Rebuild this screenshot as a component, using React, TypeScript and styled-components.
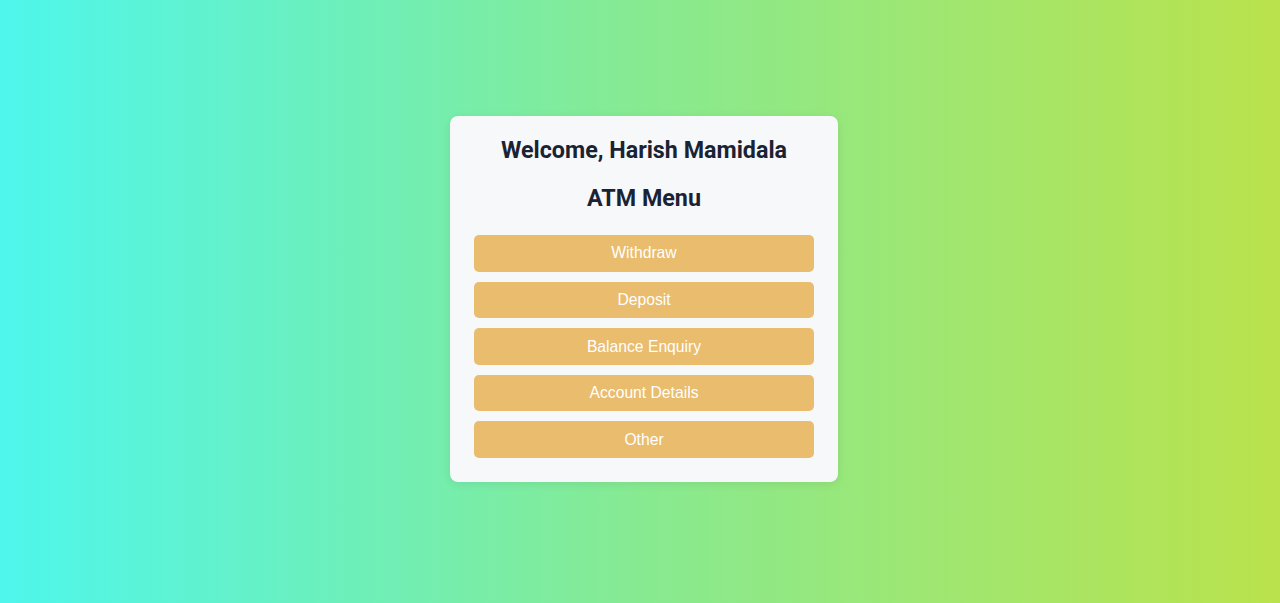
import styled, { createGlobalStyle } from 'styled-components';

const MENU_ITEMS = ['Withdraw', 'Deposit', 'Balance Enquiry', 'Account Details', 'Other'];

const GlobalStyle = createGlobalStyle`
  html, body {
    margin: 0;
    padding: 0;
  }
  body {
    font-family: Roboto, "Liberation Sans", Arial, sans-serif;
  }
`;

export default function App() {
  return (
    <>
      <GlobalStyle />
      <Page>
        <Card>
          <Greeting>Welcome, Harish Mamidala</Greeting>
          <MenuTitle>ATM Menu</MenuTitle>
          <MenuList>
            {MENU_ITEMS.map((label) => (
              <MenuButton key={label}>{label}</MenuButton>
            ))}
          </MenuList>
        </Card>
      </Page>
    </>
  );
}

const Page = styled.div`
  width: 100%;
  height: 603px;
  background: linear-gradient(90deg, #4ef6ec 0%, #87ea91 50%, #bae24c 100%);
  display: flex;
  align-items: center;
  justify-content: center;
`;

const Card = styled.div`
  width: 340px;
  padding: 24px;
  margin: -5px 0 0 8px;
  background-color: #f7f8fa;
  border-radius: 8px;
  box-shadow: 0 2px 10px rgba(0, 0, 0, 0.08);
  display: flex;
  flex-direction: column;
  align-items: center;
`;

const Greeting = styled.h2`
  margin: -4px 0 0;
  font-family: Roboto, "Liberation Sans", sans-serif;
  font-size: 23.3px;
  font-weight: 700;
  line-height: 28px;
  color: #1a2333;
`;

const MenuTitle = styled(Greeting)`
  margin-top: 20px;
`;

const MenuList = styled.div`
  width: 100%;
  margin-top: 23px;
  display: flex;
  flex-direction: column;
  gap: 10px;
`;

const MenuButton = styled.button`
  width: 100%;
  height: 36.6px;
  border: none;
  border-radius: 5px;
  background-color: #e9bc6e;
  color: #ffffff;
  font-family: "Liberation Sans", Arial, sans-serif;
  font-size: 15.7px;
  cursor: pointer;
  &:hover {
    background-color: #e2b05c;
  }
`;
